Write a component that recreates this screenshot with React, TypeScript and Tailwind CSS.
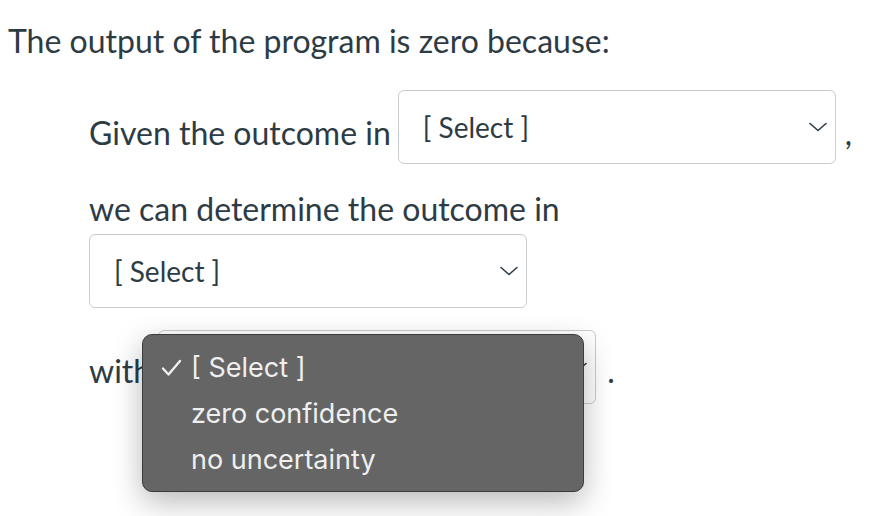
import React from "react";

function Chevron() {
  return (
    <svg width="18" height="10" viewBox="0 0 18 10" fill="none" className="shrink-0">
      <path d="M1 1.5 L9 8.5 L17 1.5" stroke="#2d3b45" strokeWidth="1.6" strokeLinecap="round" strokeLinejoin="round" />
    </svg>
  );
}

function SelectBox() {
  return (
    <div className="flex h-[74px] w-[438px] shrink-0 items-center justify-between rounded-[6px] border border-[#c7cdd1] bg-white pl-[24px] pr-[8px]">
      <span className="text-[28px] leading-[36px]">[ Select ]</span>
      <Chevron />
    </div>
  );
}

const OPTIONS = ["[ Select ]", "zero confidence", "no uncertainty"];

export default function App() {
  return (
    <div className="relative h-[516px] w-[884px] overflow-hidden bg-white font-['Lato',sans-serif] text-[#2d3b45]">
      <p className="pl-[8px] pt-[23px] text-[32px] leading-[36px]">
        The output of the program is zero because:
      </p>

      <div className="pl-[89px]">
        <div className="mt-[31px] flex items-start">
          <span className="mt-[25px] text-[32px] leading-[36px]">Given the outcome in</span>
          <div className="ml-[7px]">
            <SelectBox />
          </div>
          <span className="ml-[9px] mt-[25px] text-[32px] leading-[36px]">,</span>
        </div>

        <p className="mt-[27px] text-[32px] leading-[36px]">we can determine the outcome in</p>

        <div className="mt-[7px] flex">
          <SelectBox />
        </div>

        <div className="mt-[22px] flex items-start">
          <span className="mt-[23px] text-[32px] leading-[36px]">with</span>
          <div className="ml-[7px]">
            <SelectBox />
          </div>
          <span className="ml-[11px] mt-[23px] text-[32px] leading-[36px]">.</span>
        </div>
      </div>

      {/* open native-style option list */}
      <div className="absolute left-[142px] top-[334px] flex h-[158px] w-[442px] flex-col rounded-[10px] border border-[#3c3c3c] bg-[#656565] pb-[8px] pt-[10px] font-['Inter',sans-serif] text-[#efefef] shadow-[0_10px_30px_rgba(0,0,0,0.28)]">
        {OPTIONS.map((o, i) => (
          <div key={o} className="flex h-[47px] items-center">
            <span className="flex w-[48px] justify-end pr-[9px]">
              {i === 0 && (
                <svg width="21" height="18" viewBox="0 0 21 18" fill="none">
                  <path d="M2 9.5 L7.5 15.5 L19 2" stroke="#efefef" strokeWidth="2.4" strokeLinecap="round" strokeLinejoin="round" />
                </svg>
              )}
            </span>
            <span className="text-[27px] leading-[32px]">{o}</span>
          </div>
        ))}
      </div>
    </div>
  );
}
